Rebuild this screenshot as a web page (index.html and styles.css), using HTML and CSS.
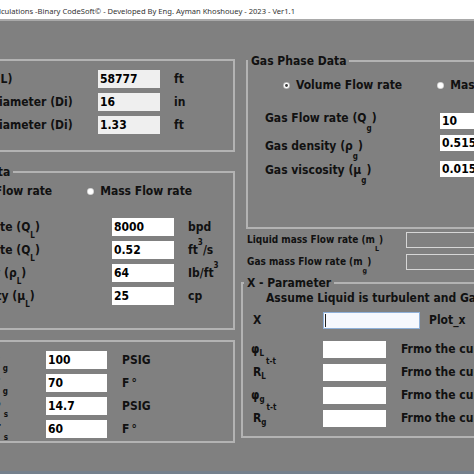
FILE: index.html
```html
<!DOCTYPE html>
<html>
<head>
<meta charset="utf-8">
<title>Two Phase Flow Calculations</title>
<link rel="stylesheet" href="styles.css">
</head>
<body>
<div class="window">
  <div class="titlebar"><span class="title">lculations -Binary CodeSoft© - Developed By Eng. Ayman Khoshouey - 2023 - Ver1.1</span></div>
  <div class="client">
    <div class="col-left">
      <fieldset class="box pipe">
        <legend>Pipe Data</legend>
        <div class="grid pipe-grid">
          <div class="lbl">Pipe Length (L)</div><div class="tb ro">58777</div><div class="unit">ft</div>
          <div class="lbl">Pipe Inside Diameter (Di)</div><div class="tb ro">16</div><div class="unit">in</div>
          <div class="lbl">Pipe Inside Diameter (Di)</div><div class="tb ro">1.33</div><div class="unit">ft</div>
        </div>
      </fieldset>

      <fieldset class="box liquid">
        <legend>Liquid Phase Data</legend>
        <div class="radios liq-radios">
          <span class="radio"><svg width="7" height="7" viewBox="0 0 7 7"><circle cx="3.5" cy="3.5" r="3.2" fill="#fff" stroke="#9a9a9a" stroke-width="0.6"/><circle cx="3.5" cy="3.5" r="1.4" fill="#3a3a3a"/></svg>Volume Flow rate</span>
          <span class="radio"><svg width="7" height="7" viewBox="0 0 7 7"><circle cx="3.5" cy="3.5" r="3.2" fill="#fff" stroke="#cfcfcf" stroke-width="0.6"/></svg>Mass Flow rate</span>
        </div>
        <div class="grid liq-grid">
          <div class="lbl">Liquid Flow rate (Q<sub class="sl">L</sub>)</div><div class="tb">8000</div><div class="unit">bpd</div>
          <div class="lbl">Liquid Flow rate (Q<sub class="sl">L</sub>)</div><div class="tb">0.52</div><div class="unit">ft<sup>3</sup>/s</div>
          <div class="lbl">Liquid density (ρ<sub class="sl">L</sub>)</div><div class="tb">64</div><div class="unit">Ib/ft<sup>3</sup></div>
          <div class="lbl">Liquid viscosity (μ<sub class="sl">L</sub>)</div><div class="tb">25</div><div class="unit">cp</div>
        </div>
      </fieldset>

      <fieldset class="box cond">
        <legend>Conditions</legend>
        <div class="grid cond-grid">
          <div class="lbl rt"><span>Operating pressure P<sub class="sl">g</sub></span></div><div class="tb">100</div><div class="unit">PSIG</div>
          <div class="lbl rt"><span>Operating temperature T<sub class="sl">g</sub></span></div><div class="tb">70</div><div class="unit">F<span class="deg">°</span></div>
          <div class="lbl rt"><span>Standard pressure P<sub class="sl">s</sub></span></div><div class="tb">14.7</div><div class="unit">PSIG</div>
          <div class="lbl rt"><span>Standard temperature T<sub class="sl">s</sub></span></div><div class="tb">60</div><div class="unit">F<span class="deg">°</span></div>
        </div>
      </fieldset>
    </div>

    <div class="col-right">
      <fieldset class="box gas">
        <legend>Gas Phase Data</legend>
        <div class="radios gas-radios">
          <span class="radio"><svg width="7" height="7" viewBox="0 0 7 7"><circle cx="3.5" cy="3.5" r="3.2" fill="#fff" stroke="#9a9a9a" stroke-width="0.6"/><circle cx="3.5" cy="3.5" r="1.4" fill="#3a3a3a"/></svg>Volume Flow rate</span>
          <span class="radio"><svg width="7" height="7" viewBox="0 0 7 7"><circle cx="3.5" cy="3.5" r="3.2" fill="#fff" stroke="#cfcfcf" stroke-width="0.6"/></svg>Mass Flow rate</span>
        </div>
        <div class="gas-body">
          <div class="gas-labels">
            <div class="glbl">Gas Flow rate (Q<sub class="sg">g</sub>)</div>
            <div class="glbl">Gas density (ρ<sub class="sg">g</sub>)</div>
            <div class="glbl">Gas viscosity (μ<sub class="sg">g</sub>)</div>
          </div>
          <div class="gas-inputs">
            <div class="tb t16">10</div>
            <div class="tb t16">0.515</div>
            <div class="tb t16">0.015</div>
          </div>
        </div>
      </fieldset>

      <div class="mass">
        <div class="mlbl">Liquid mass Flow rate (m<sub class="sm">L</sub>)</div><div class="dtb"></div>
        <div class="mlbl">Gas mass Flow rate (m<sub class="sm">g</sub>)</div><div class="dtb"></div>
      </div>

      <fieldset class="box xparam">
        <legend>X - Parameter</legend>
        <div class="assume">Assume Liquid is turbulent and Gas is turbulent</div>
        <div class="xrow">
          <div class="lbl17">X</div>
          <div class="tb t17 focus"><span class="caret"></span></div>
          <div class="unit17">Plot_x</div>
        </div>
        <div class="phi-grid">
          <div class="lbl17">φ<sub class="sp">L</sub><sub class="stt">t-t</sub></div><div class="tb t17"></div><div class="unit17">Frmo the curve</div>
          <div class="lbl17 rl">R<sub class="sp">L</sub></div><div class="tb t17"></div><div class="unit17">Frmo the curve</div>
          <div class="lbl17">φ<sub class="sp">g</sub><sub class="stt">t-t</sub></div><div class="tb t17"></div><div class="unit17">Frmo the curve</div>
          <div class="lbl17 rl">R<sub class="sp">g</sub></div><div class="tb t17"></div><div class="unit17">Frmo the curve</div>
        </div>
      </fieldset>
    </div>
  </div>
  <div class="footer"></div>
</div>
</body>
</html>
```
FILE: styles.css
```css
* { box-sizing: border-box; }
html, body { margin: 0; padding: 0; }
body {
  width: 474px;
  height: 474px;
  overflow: hidden;
  background: #808080;
  font-family: "DejaVu Sans Condensed", "DejaVu Sans", sans-serif;
  font-stretch: condensed;
  font-weight: bold;
  font-size: 12px;
  color: #111;
}
.window { display: flex; flex-direction: column; height: 474px; }
.titlebar {
  flex: 0 0 21px;
  background: #fff;
  border-bottom: 2px solid #a9a9a9;
  padding-top: 3px;
  display: flex;
  align-items: center;
  overflow: hidden;
}
.title {
  font-family: "Noto Sans", sans-serif;
  font-stretch: normal;
  font-weight: normal;
  font-size: 7.6px;
  color: #333;
  white-space: nowrap;
  margin-left: -1px;
}
.client { flex: 1 1 auto; display: flex; overflow: hidden; }
.footer { flex: 0 0 3px; background: #75808c; }

.col-left { flex: 0 0 340px; margin-left: -105px; display: flex; flex-direction: column; }
.col-right { flex: 0 0 320px; margin-left: 6px; display: flex; flex-direction: column; }

.box {
  margin: 0;
  padding: 0;
  border: 2px solid #b3b3b3;
  min-width: 0;
}
legend {
  padding: 0 3px;
  line-height: 14px;
  font-size: 12px;
  white-space: nowrap;
}

sub, sup { line-height: 0; font-size: 8px; }
sub.sl { vertical-align: -7px; }
sub.sg { vertical-align: -9px; }
sub.sm { vertical-align: -8px; font-size: 7px; }
sub.sp { vertical-align: -3px; }
sub.stt { vertical-align: -11px; margin-left: 2px; }
sup { vertical-align: 9px; }
.deg { margin-left: 2px; }

.grid { display: grid; align-items: center; grid-auto-rows: 18px; row-gap: 5px; column-gap: 14px; }
.lbl, .unit { height: 18px; line-height: 18px; white-space: nowrap; }
.lbl.rt { display: flex; justify-content: flex-end; padding-right: 23px; }
.lbl.rt sub { margin-left: 3px; }
.tb {
  height: 18px;
  line-height: 18px;
  background: #fff;
  color: #000;
  padding-left: 2px;
  white-space: nowrap;
  overflow: hidden;
}
.tb.ro { background: #efefef; }
.tb.t16 { height: 16px; line-height: 16px; }
.tb.t17 { height: 17px; line-height: 17px; }

/* pipe */
.box.pipe { margin-top: 32px; padding-bottom: 16px; }
.pipe-grid { margin-top: 3px; padding-left: 22px; grid-template-columns: 165px 62px auto; }

/* liquid */
.box.liquid { margin-top: 13px; padding-bottom: 23px; }
.radios { display: flex; align-items: center; height: 14px; line-height: 14px; }
.radio { display: flex; align-items: center; gap: 6px; white-space: nowrap; }
.radio + .radio { margin-left: 35px; }
.radio svg { flex: 0 0 7px; }
.liq-radios { margin-top: 5px; padding-left: 36px; }
.liq-grid { margin-top: 20px; padding-left: 17px; grid-template-columns: 184px 62px auto; }

/* conditions */
.box.cond { margin-top: 4px; padding-bottom: 3px; }
.cond-grid { margin-top: 3px; grid-template-columns: 134px 61px auto; column-gap: 15px; }

/* gas */
.box.gas { margin-top: 33px; margin-left: 5px; padding-bottom: 49px; }
.gas-radios { margin-top: 10px; padding-left: 35px; }
.gas-body { display: flex; align-items: flex-start; padding-left: 17px; }
.gas-labels { flex: 0 0 175px; margin-top: 18px; display: flex; flex-direction: column; }
.glbl { height: 16px; line-height: 16px; white-space: nowrap; }
.glbl:nth-child(2) { margin-top: 12px; }
.glbl:nth-child(3) { margin-top: 8px; }
.gas-inputs { flex: 0 0 80px; margin-top: 21px; display: flex; flex-direction: column; }
.gas-inputs .tb:nth-child(2) { margin-top: 6px; }
.gas-inputs .tb:nth-child(3) { margin-top: 10px; }

/* mass flow */
.mass {
  margin-top: 3px;
  padding-left: 6px;
  display: grid;
  grid-template-columns: 149px 120px;
  grid-auto-rows: 16px;
  column-gap: 10px;
  row-gap: 6px;
  align-items: center;
}
.mlbl { font-size: 10px; height: 16px; line-height: 16px; white-space: nowrap; }
.dtb { height: 16px; border: 1px solid #d6d6d6; background: #808080; }

/* x parameter */
.box.xparam { margin-top: 6px; padding-bottom: 9px; }
.xparam legend { margin-left: 1px; }
.assume { margin-top: 1px; padding-left: 23px; line-height: 14px; height: 14px; white-space: nowrap; }
.xrow {
  margin-top: 7px;
  padding-left: 10px;
  display: grid;
  grid-template-columns: 61px 97px auto;
  column-gap: 9px;
  grid-auto-rows: 17px;
  align-items: center;
}
.lbl17, .unit17 { height: 17px; line-height: 17px; white-space: nowrap; }
.lbl17.rl { padding-left: 2px; }
.tb.focus { background: #f6f8fd; border: 1px solid #8fb0d8; padding-left: 1px; display: flex; align-items: center; }
.caret { display: block; width: 1px; height: 13px; background: #222; }
.phi-grid {
  margin-top: 12px;
  padding-left: 8px;
  display: grid;
  grid-template-columns: 57px 63px auto;
  column-gap: 15px;
  row-gap: 6px;
  grid-auto-rows: 17px;
  align-items: center;
}
```
